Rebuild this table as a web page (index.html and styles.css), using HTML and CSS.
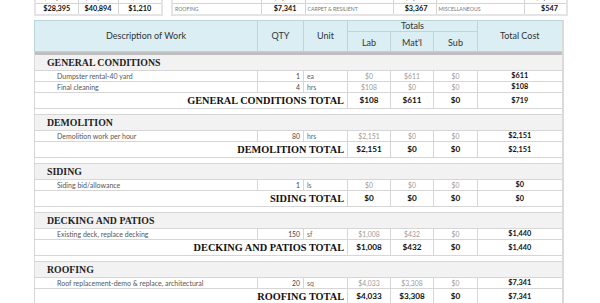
FILE: index.html
```html
<!DOCTYPE html>
<html>
<head>
<meta charset="utf-8">
<link rel="stylesheet" href="styles.css">
</head>
<body>
<div class="page">
  <div class="summary">
    <table class="sum sum-a">
      <colgroup><col class="a1"><col class="a2"><col class="a3"></colgroup>
      <tr class="cut"><td>$13,257</td><td>$14,776</td><td>$555</td></tr>
      <tr><td>$28,395</td><td>$40,894</td><td>$1,210</td></tr>
    </table>
    <table class="sum sum-b">
      <colgroup><col class="b1"><col class="b2"><col class="b3"><col class="b4"><col class="b5"><col class="b6"></colgroup>
      <tr class="cut"><td class="lbl">INSULATION</td><td class="val">$1,770</td><td class="lbl">CABINETS</td><td class="val">$5,288</td><td class="lbl">APPLIANCES</td><td class="val">$3,687</td></tr>
      <tr><td class="lbl">ROOFING</td><td class="val">$7,341</td><td class="lbl">CARPET &amp; RESILIENT</td><td class="val">$3,367</td><td class="lbl">MISCELLANEOUS</td><td class="val">$547</td></tr>
    </table>
  </div>

  <table class="est">
    <colgroup>
      <col class="c-desc"><col class="c-qty"><col class="c-unit"><col class="c-lab"><col class="c-mat"><col class="c-sub"><col class="c-tot">
    </colgroup>
    <thead>
      <tr class="h1"><th rowspan="2">Description of Work</th><th rowspan="2">QTY</th><th rowspan="2">Unit</th><th colspan="3" class="totals">Totals</th><th rowspan="2">Total Cost</th></tr>
      <tr class="h2"><th>Lab</th><th>Mat'l</th><th>Sub</th></tr>
      <tr class="bar"><td colspan="7"></td></tr>
    </thead>
    <tbody>
      <tr class="sec"><td colspan="7">GENERAL CONDITIONS</td></tr>
      <tr class="item"><td class="d">Dumpster rental-40 yard</td><td class="q">1</td><td class="u">ea</td><td class="n">$0</td><td class="n">$611</td><td class="n">$0</td><td class="t">$611</td></tr>
      <tr class="item"><td class="d">Final cleaning</td><td class="q">4</td><td class="u">hrs</td><td class="n">$108</td><td class="n">$0</td><td class="n">$0</td><td class="t">$108</td></tr>
      <tr class="tot"><td colspan="3" class="tl">GENERAL CONDITIONS TOTAL</td><td class="b">$108</td><td class="b">$611</td><td class="b">$0</td><td class="g">$719</td></tr>
      <tr class="sp"><td colspan="7"></td></tr>

      <tr class="sec"><td colspan="7">DEMOLITION</td></tr>
      <tr class="item"><td class="d">Demolition work per hour</td><td class="q">80</td><td class="u">hrs</td><td class="n">$2,151</td><td class="n">$0</td><td class="n">$0</td><td class="t">$2,151</td></tr>
      <tr class="tot"><td colspan="3" class="tl">DEMOLITION TOTAL</td><td class="b">$2,151</td><td class="b">$0</td><td class="b">$0</td><td class="g">$2,151</td></tr>
      <tr class="sp"><td colspan="7"></td></tr>

      <tr class="sec"><td colspan="7">SIDING</td></tr>
      <tr class="item"><td class="d">Siding bid/allowance</td><td class="q">1</td><td class="u">ls</td><td class="n">$0</td><td class="n">$0</td><td class="n">$0</td><td class="t">$0</td></tr>
      <tr class="tot"><td colspan="3" class="tl">SIDING TOTAL</td><td class="b">$0</td><td class="b">$0</td><td class="b">$0</td><td class="g">$0</td></tr>
      <tr class="sp"><td colspan="7"></td></tr>

      <tr class="sec"><td colspan="7">DECKING AND PATIOS</td></tr>
      <tr class="item"><td class="d">Existing deck, replace decking</td><td class="q">150</td><td class="u">sf</td><td class="n">$1,008</td><td class="n">$432</td><td class="n">$0</td><td class="t">$1,440</td></tr>
      <tr class="tot"><td colspan="3" class="tl">DECKING AND PATIOS TOTAL</td><td class="b">$1,008</td><td class="b">$432</td><td class="b">$0</td><td class="g">$1,440</td></tr>
      <tr class="sp"><td colspan="7"></td></tr>

      <tr class="sec"><td colspan="7">ROOFING</td></tr>
      <tr class="item"><td class="d">Roof replacement-demo &amp; replace, architectural</td><td class="q">20</td><td class="u">sq</td><td class="n">$4,033</td><td class="n">$3,308</td><td class="n">$0</td><td class="t">$7,341</td></tr>
      <tr class="tot"><td colspan="3" class="tl">ROOFING TOTAL</td><td class="b">$4,033</td><td class="b">$3,308</td><td class="b">$0</td><td class="g">$7,341</td></tr>
      <tr class="sp"><td colspan="7"></td></tr>
    </tbody>
  </table>
</div>
</body>
</html>
```

FILE: styles.css
```css
html, body {
  margin: 0;
  padding: 0;
  background: #ffffff;
}
body {
  font-family: "Lato", "Open Sans", sans-serif;
  color: #222;
  overflow: hidden;
}
.page {
  width: 600px;
  padding-left: 34px;
  box-sizing: border-box;
}

/* summary strip */
.summary {
  display: flex;
  gap: 8px;
  margin-top: -8px;
  height: 24px;
}
.sum {
  border-collapse: collapse;
  table-layout: fixed;
  border: 2px solid #e4e4e4;
  border-top: none;
  height: 24px;
}
.sum td {
  border: 1px solid #d4d4d4;
  padding: 0 3px;
  height: 10px;
  line-height: 10px;
  white-space: nowrap;
  overflow: hidden;
}
.sum-a { width: 127px; }
.a1 { width: 43px; }
.a2 { width: 40px; }
.a3 { width: 44px; }
.sum-a td {
  text-align: center;
  font-weight: 700;
  font-size: 7.3px;
  color: #111;
}
.sum-b { width: 395px; }
.b1 { width: 89px; }
.b2 { width: 44px; }
.b3 { width: 88px; }
.b4 { width: 43px; }
.b5 { width: 88px; }
.b6 { width: 43px; }
.sum-b .lbl {
  font-size: 5.2px;
  color: #777;
  padding-left: 2px;
}
.sum-b .val {
  text-align: right;
  font-weight: 700;
  font-size: 7.3px;
  color: #111;
  padding-right: 8px;
}

/* estimate table */
.est {
  margin-top: 4px;
  width: 528px;
  border-collapse: collapse;
  table-layout: fixed;
  border-right: 2px solid #dadada;
  border-left: 1px solid #dadada;
}
.c-desc { width: 223px; }
.c-qty { width: 46px; }
.c-unit { width: 44px; }
.c-lab { width: 43px; }
.c-mat { width: 43px; }
.c-sub { width: 44px; }
.c-tot { width: 85px; }

.est th {
  background: #daeef3;
  font-weight: 400;
  font-size: 9px;
  color: #333;
  border: 1px solid #bcd4dc;
  padding: 0;
  text-align: center;
}
.h1 th { height: 10px; line-height: 10px; }
.h2 th { height: 17px; line-height: 17px; padding-top: 2px; }
.bar td {
  height: 3px;
  padding: 0;
  background: #bfbfbf;
  border: none;
}

.est td { padding: 0; }

.sec td {
  background: #f2f2f2;
  height: 15px;
  line-height: 15px;
  font-family: "Liberation Serif", "Times New Roman", serif;
  font-weight: 700;
  font-size: 9.8px;
  color: #222;
  padding-left: 12px;
  border-bottom: 1px solid #d6d6d6;
}

.item td {
  height: 10px;
  line-height: 10px;
  font-size: 6.8px;
  border: 1px solid #d6d6d6;
  white-space: nowrap;
}
.item .d {
  padding-left: 22px;
  font-size: 7px;
  color: #555;
}
.item .q {
  text-align: right;
  color: #444;
  padding-right: 3px;
}
.item .u {
  padding-left: 3px;
  color: #666;
}
.item .n {
  text-align: center;
  color: #9a9a9a;
}
.item .t {
  text-align: center;
  font-weight: 700;
  color: #111;
  font-size: 7.3px;
}

.tot td {
  height: 15px;
  line-height: 15px;
  border: 1px solid #d6d6d6;
  background: #fff;
  white-space: nowrap;
}
.tot .tl {
  text-align: right;
  font-family: "Liberation Serif", "Times New Roman", serif;
  font-weight: 700;
  font-size: 10.3px;
  color: #111;
  padding-right: 3px;
}
.tot .b {
  text-align: center;
  font-weight: 700;
  font-size: 8.2px;
  color: #111;
}
.tot .g {
  text-align: center;
  font-weight: 700;
  font-size: 7.3px;
  color: #111;
}

.sp td {
  height: 5px;
  padding: 0;
  background: #fff;
  border-top: 1px solid #d6d6d6;
  border-bottom: 1px solid #d6d6d6;
}
```
